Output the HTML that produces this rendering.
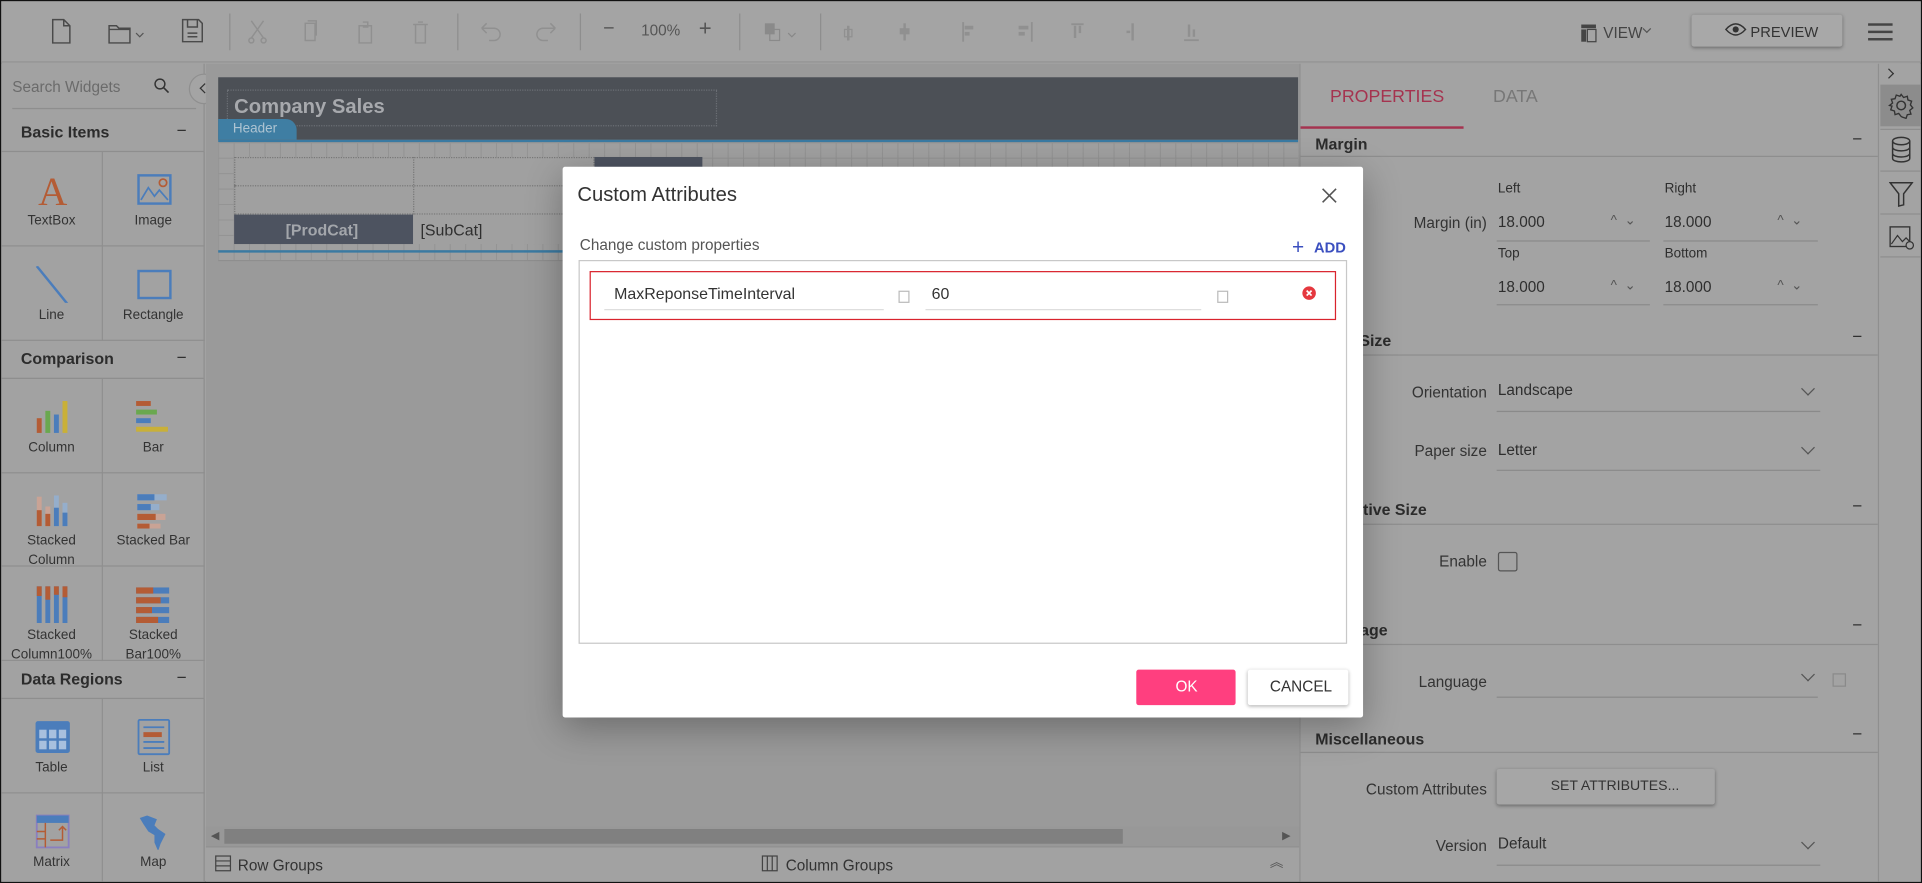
<!DOCTYPE html>
<html><head><meta charset="utf-8">
<style>
*{box-sizing:border-box;margin:0;padding:0}
html,body{width:1922px;height:883px;overflow:hidden;background:#000}
#w{position:absolute;left:0;top:0;width:1568px;height:720px;transform:scale(1.22577,1.22639);transform-origin:0 0;background:#a2a2a2;font-family:"Liberation Sans",sans-serif;color:#2e2e2e;overflow:hidden;border:1px solid #111}
.a{position:absolute}
.t{position:absolute;white-space:nowrap}
.hl{position:absolute;height:1px;background:#8e8e8e}
.vl{position:absolute;width:1px;background:#8e8e8e}
.cell{position:absolute;width:83px;height:77px;border-right:1px solid #8f8f8f;border-bottom:1px solid #8f8f8f;font-size:11px;text-align:center;color:#333}
.cell svg{position:absolute;left:27px;top:16px}
.cell span{position:absolute;left:0;right:0;top:48px;line-height:16px}
.sec{position:absolute;font-size:13px;font-weight:bold;color:#2c2c2c;white-space:nowrap}
.lab{position:absolute;font-size:12.5px;color:#333;text-align:right;white-space:nowrap}
.val{position:absolute;font-size:12.5px;color:#2e2e2e;white-space:nowrap}
.ul{position:absolute;height:1px;background:#8a8a8a}
.chev{position:absolute;width:8px;height:8px;border-right:1px solid #555;border-bottom:1px solid #555;transform:rotate(45deg)}
</style></head><body><div id="w">

<!-- toolbar -->
<div class="a" style="left:0;top:0;width:1568px;height:50px;background:#a4a4a4;border-bottom:1px solid #939393"></div>
<svg class="a" style="left:38px;top:13px" width="22" height="22"><path d="M4 2h9l5 5v14H4z M13 2v5h5" fill="none" stroke="#4a4a4a" stroke-width="1.2"/></svg>
<svg class="a" style="left:86px;top:14px" width="34" height="22"><path d="M2 6h6l2 2h9v12H2z M2 9h17" fill="none" stroke="#4a4a4a" stroke-width="1.2"/><path d="M24 12l3 3 3-3" fill="none" stroke="#555" stroke-width="1"/></svg>
<svg class="a" style="left:145px;top:13px" width="22" height="22"><path d="M3 2h13l3 3v15H3z M7 2v6h8V2 M7 13h8 M7 16h8" fill="none" stroke="#4a4a4a" stroke-width="1.2"/></svg>
<div class="vl" style="left:186px;top:10px;height:30px"></div>
<svg class="a" style="left:200px;top:14px" width="160" height="22" fill="none" stroke="#909090" stroke-width="1.2"><path d="M4 2l10 14 M14 2L4 16 M4 16a2 2 0 1 0 .1 0 M14 16a2 2 0 1 0 .1 0"/><path d="M48 4h8v14h-8z M50 2h7v12"/><path d="M92 6h10v14H92z M95 3h4v4h-4"/><path d="M136 5h12 M138 5v15h8V5 M140 3h4"/></svg>
<div class="vl" style="left:372px;top:10px;height:30px"></div>
<svg class="a" style="left:388px;top:14px" width="70" height="22" fill="none" stroke="#909090" stroke-width="1.2"><path d="M4 8h10a5 5 0 0 1 0 10h-4 M4 8l4-4 M4 8l4 4"/><path d="M64 8H54a5 5 0 0 0 0 10h4 M64 8l-4-4 M64 8l-4 4"/></svg>
<div class="vl" style="left:472px;top:10px;height:30px"></div>
<div class="t" style="left:491px;top:14px;font-size:16px;color:#555">−</div>
<div class="t" style="left:522px;top:17px;font-size:12.5px;color:#555">100%</div>
<div class="t" style="left:569px;top:12px;font-size:18px;color:#555">+</div>
<div class="vl" style="left:602px;top:10px;height:30px"></div>
<svg class="a" style="left:620px;top:14px" width="40" height="22"><rect x="3" y="4" width="8" height="9" fill="#8a8a8a"/><rect x="7" y="9" width="8" height="9" fill="none" stroke="#8a8a8a"/><path d="M22 12l3 3 3-3" fill="none" stroke="#888"/></svg>
<div class="vl" style="left:668px;top:10px;height:30px"></div>
<svg class="a" style="left:680px;top:14px" width="380" height="22" fill="#909090"><rect x="10" y="6" width="2" height="12"/><rect x="8" y="9" width="6" height="6" fill="none" stroke="#909090"/><rect x="56" y="4" width="2" height="14"/><rect x="53" y="8" width="8" height="5"/><rect x="104" y="3" width="1.5" height="16"/><rect x="106" y="6" width="7" height="3"/><rect x="106" y="11" width="4" height="3"/><rect x="150" y="6" width="8" height="3"/><rect x="150" y="11" width="5" height="3"/><rect x="160" y="3" width="1.5" height="16"/><rect x="193" y="4" width="10" height="1.5"/><rect x="195" y="6" width="2" height="10"/><rect x="199" y="6" width="2" height="6"/><rect x="242" y="4" width="2" height="14"/><rect x="238" y="10" width="3" height="2"/><rect x="288" y="5" width="2" height="10"/><rect x="292" y="9" width="2" height="6"/><rect x="285" y="17" width="12" height="1.5"/></svg>
<svg class="a" style="left:1288px;top:18px" width="14" height="16"><rect x="1" y="1" width="12" height="3" fill="#444"/><rect x="1" y="5" width="4" height="10" fill="#444"/><rect x="6" y="5" width="7" height="10" fill="none" stroke="#444"/></svg>
<div class="t" style="left:1307px;top:19px;font-size:12.5px;color:#444">VIEW</div>
<div class="chev" style="left:1340px;top:20px;width:5px;height:5px"></div>
<div class="a" style="left:1379px;top:11px;width:123px;height:26px;background:#a8a8a8;box-shadow:0 1px 3px rgba(0,0,0,.35);border-radius:2px"></div>
<svg class="a" style="left:1406px;top:16px" width="18" height="14"><path d="M1 7q8-9 16 0q-8 9-16 0z" fill="none" stroke="#333" stroke-width="1.2"/><circle cx="9" cy="7" r="2.5" fill="#333"/></svg>
<div class="t" style="left:1427px;top:18px;font-size:12px;color:#333">PREVIEW</div>
<div class="a" style="left:1523px;top:18px;width:20px;height:2px;background:#444;box-shadow:0 6px 0 #444,0 12px 0 #444"></div>

<!-- left panel -->
<div class="a" style="left:0;top:51px;width:166px;height:669px;background:#a2a2a2;border-right:1px solid #8f8f8f"></div>
<div class="t" style="left:9px;top:63px;font-size:12.5px;color:#6b6b6b">Search Widgets</div>
<svg class="a" style="left:124px;top:62px" width="14" height="14"><circle cx="5.5" cy="5.5" r="4" fill="none" stroke="#333" stroke-width="1.2"/><path d="M8.5 8.5l4 4" stroke="#333" stroke-width="1.3"/></svg>
<div class="hl" style="left:9px;top:87px;width:150px"></div>
<div class="sec" style="left:16px;top:99px">Basic Items</div><div class="t" style="left:143px;top:97px;font-size:14px">−</div>
<div class="hl" style="left:0;top:122px;width:165px"></div>
<div class="cell" style="left:0;top:123px"><svg width="30" height="30"><text x="15" y="27" text-anchor="middle" font-family="Liberation Serif" font-size="33" fill="#b45c35">A</text></svg><span>TextBox</span></div>
<div class="cell" style="left:83px;top:123px"><svg width="30" height="30"><rect x="2" y="3" width="26" height="23" fill="none" stroke="#4b7dbb" stroke-width="2"/><path d="M4 23l6-10 5 7 4-5 7 8" fill="none" stroke="#4b7dbb" stroke-width="1.4"/><circle cx="22" cy="9" r="3" fill="none" stroke="#b45c35" stroke-width="1.4"/></svg><span>Image</span></div>
<div class="cell" style="left:0;top:200px"><svg width="30" height="30"><path d="M2 0l26 32" stroke="#4b7dbb" stroke-width="2"/></svg><span>Line</span></div>
<div class="cell" style="left:83px;top:200px"><svg width="30" height="30"><rect x="2" y="4" width="26" height="22" fill="none" stroke="#4b7dbb" stroke-width="2"/></svg><span>Rectangle</span></div>
<div class="sec" style="left:16px;top:284px">Comparison</div><div class="t" style="left:143px;top:282px;font-size:14px">−</div>
<div class="hl" style="left:0;top:307px;width:165px"></div>
<div class="cell" style="left:0;top:308px"><svg width="30" height="30"><rect x="2" y="16" width="4" height="12" fill="#b45c35"/><rect x="9" y="10" width="4" height="18" fill="#6aa84f"/><rect x="16" y="13" width="4" height="15" fill="#4b7dbb"/><rect x="23" y="2" width="4" height="26" fill="#c9b038"/></svg><span>Column</span></div>
<div class="cell" style="left:83px;top:308px"><svg width="30" height="30"><rect x="0" y="2" width="12" height="4" fill="#b45c35"/><rect x="0" y="9" width="17" height="4" fill="#6aa84f"/><rect x="0" y="16" width="12" height="4" fill="#4b7dbb"/><rect x="0" y="23" width="26" height="4" fill="#c9b038"/></svg><span>Bar</span></div>
<div class="cell" style="left:0;top:384px"><svg width="30" height="30"><rect x="2" y="4" width="4" height="24" fill="#c9a395"/><rect x="2" y="15" width="4" height="13" fill="#b45c35"/><rect x="9" y="12" width="4" height="16" fill="#c9a395"/><rect x="9" y="18" width="4" height="10" fill="#b45c35"/><rect x="16" y="3" width="4" height="25" fill="#95aecb"/><rect x="16" y="13" width="4" height="15" fill="#4b7dbb"/><rect x="23" y="9" width="4" height="19" fill="#95aecb"/><rect x="23" y="17" width="4" height="11" fill="#4b7dbb"/></svg><span>Stacked<br>Column</span></div>
<div class="cell" style="left:83px;top:384px"><svg width="30" height="30"><rect x="1" y="2" width="24" height="5" fill="#95aecb"/><rect x="1" y="2" width="14" height="5" fill="#4b7dbb"/><rect x="1" y="10" width="18" height="5" fill="#95aecb"/><rect x="1" y="10" width="11" height="5" fill="#4b7dbb"/><rect x="1" y="18" width="23" height="5" fill="#c9a395"/><rect x="1" y="18" width="15" height="5" fill="#b45c35"/><rect x="1" y="26" width="19" height="4" fill="#c9a395"/><rect x="1" y="26" width="10" height="4" fill="#b45c35"/></svg><span>Stacked Bar</span></div>
<div class="cell" style="left:0;top:461px"><svg width="30" height="30"><g fill="#4b7dbb"><rect x="2" y="0" width="4" height="30"/><rect x="9" y="0" width="4" height="30"/><rect x="16" y="0" width="4" height="30"/><rect x="23" y="0" width="4" height="30"/></g><g fill="#b45c35"><rect x="2" y="0" width="4" height="8"/><rect x="9" y="0" width="4" height="11"/><rect x="16" y="0" width="4" height="7"/><rect x="23" y="0" width="4" height="9"/></g></svg><span>Stacked<br>Column100%</span></div>
<div class="cell" style="left:83px;top:461px"><svg width="30" height="30"><g fill="#4b7dbb"><rect x="0" y="1" width="27" height="5"/><rect x="0" y="9" width="27" height="5"/><rect x="0" y="17" width="27" height="5"/><rect x="0" y="25" width="27" height="5"/></g><g fill="#b45c35"><rect x="0" y="1" width="14" height="5"/><rect x="0" y="9" width="20" height="5"/><rect x="0" y="17" width="13" height="5"/><rect x="0" y="25" width="18" height="5"/></g></svg><span>Stacked<br>Bar100%</span></div>
<div class="sec" style="left:16px;top:545px">Data Regions</div><div class="t" style="left:143px;top:543px;font-size:14px">−</div>
<div class="hl" style="left:0;top:568px;width:165px"></div>
<div class="cell" style="left:0;top:569px"><svg width="30" height="30"><rect x="1" y="2" width="28" height="26" rx="2" fill="#4b7dbb"/><g fill="#a8c0de"><rect x="4" y="9" width="6" height="7"/><rect x="12" y="9" width="6" height="7"/><rect x="20" y="9" width="6" height="7"/><rect x="4" y="18" width="6" height="7"/><rect x="12" y="18" width="6" height="7"/><rect x="20" y="18" width="6" height="7"/></g></svg><span>Table</span></div>
<div class="cell" style="left:83px;top:569px"><svg width="30" height="30"><rect x="2" y="1" width="25" height="28" rx="1" fill="none" stroke="#4b7dbb" stroke-width="1.5"/><path d="M6 7h17M6 19h17M6 24h17" stroke="#4b7dbb" stroke-width="1.5"/><rect x="6" y="11" width="15" height="4" fill="#b45c35"/></svg><span>List</span></div>
<div class="cell" style="left:0;top:646px"><svg width="30" height="30"><rect x="2" y="2" width="26" height="26" fill="none" stroke="#8a7fbf" stroke-width="1.5"/><rect x="2" y="2" width="26" height="6" fill="#4b7dbb"/><path d="M2 15h7M2 21h7M9 8v20M13 22h10v-10M20 14l3-3 3 3" fill="none" stroke="#b45c35" stroke-width="1.2"/></svg><span>Matrix</span></div>
<div class="cell" style="left:83px;top:646px"><svg width="30" height="30"><path d="M3 4l6-2 8 3-2 5 3 3 6 4-4 8-2 6-3-7 0-6-5-3-4-6z" fill="#4b7dbb"/></svg><span>Map</span></div>
<div class="a" style="left:153px;top:59px;width:25px;height:25px;border-radius:50%;background:#a4a4a4;border:1px solid #8f8f8f"></div>
<div class="chev" style="left:163px;top:68px;width:6px;height:6px;transform:rotate(135deg);border-color:#333"></div>

<!-- canvas -->
<div class="a" style="left:167px;top:51px;width:892px;height:637px;background:#9a9a9a"></div>
<div class="a" style="left:177px;top:62px;width:881px;height:51px;background:#4c5056"></div>
<div class="a" style="left:184px;top:72px;width:400px;height:30px;border:1px dotted #6b6f75"></div>
<div class="t" style="left:190px;top:77px;font-size:16.5px;font-weight:bold;color:#a7a9ad">Company Sales</div>
<div class="a" style="left:177px;top:96px;width:64px;height:17px;background:#3f7ea3;border-radius:0 9px 0 0"></div>
<div class="t" style="left:189px;top:98px;font-size:11px;color:#aec4d2">Header</div>
<div class="a" style="left:177px;top:113px;width:881px;height:2px;background:#3a7aa2"></div>
<div class="a" style="left:177px;top:115px;width:881px;height:97px;background-color:#a0a0a0;background-image:linear-gradient(90deg,#939393 1px,transparent 1px),linear-gradient(#939393 1px,transparent 1px);background-size:12.6px 12.6px;border-bottom:1px solid #8e8e8e"></div>
<div class="a" style="left:190px;top:127px;width:294px;height:47px;background:#a0a0a0;border:1px dotted #777"></div>
<div class="a" style="left:190px;top:150px;width:294px;height:1px;border-top:1px dotted #777"></div>
<div class="a" style="left:336px;top:127px;width:1px;height:47px;border-left:1px dotted #777"></div>
<div class="a" style="left:484px;top:127px;width:88px;height:23px;background:#4d5360"></div>
<div class="a" style="left:190px;top:174px;width:146px;height:24px;background:#4d5360"></div>
<div class="t" style="left:232px;top:179px;font-size:13px;font-weight:bold;color:#a3a6ab">[ProdCat]</div>
<div class="a" style="left:336px;top:174px;width:240px;height:24px;background:#a0a0a0"></div>
<div class="t" style="left:342px;top:179px;font-size:13px;color:#2f2f2f">[SubCat]</div>
<div class="a" style="left:177px;top:203px;width:881px;height:2px;background:#3a7aa2"></div>
<div class="a" style="left:167px;top:673px;width:892px;height:16px;background:#989898"></div>
<div class="a" style="left:182px;top:675px;width:733px;height:12px;background:#808080"></div>
<div class="t" style="left:171px;top:675px;font-size:9px;color:#555">◀</div>
<div class="t" style="left:1045px;top:675px;font-size:9px;color:#555">▶</div>
<div class="a" style="left:167px;top:689px;width:892px;height:31px;background:#a2a2a2;border-top:1px solid #8e8e8e"></div>
<svg class="a" style="left:174px;top:696px" width="14" height="14"><rect x="1" y="1" width="12" height="12" fill="none" stroke="#444"/><path d="M1 5h12M1 9h12" stroke="#444"/></svg>
<div class="t" style="left:193px;top:698px;font-size:12.5px;color:#333">Row Groups</div>
<svg class="a" style="left:620px;top:696px" width="14" height="14"><rect x="1" y="1" width="12" height="12" fill="none" stroke="#444"/><path d="M5 1v12M9 1v12" stroke="#444"/></svg>
<div class="t" style="left:640px;top:698px;font-size:12.5px;color:#333">Column Groups</div>
<div class="t" style="left:1035px;top:694px;font-size:11px;color:#555">︽</div>

<!-- right panel -->
<div class="a" style="left:1059px;top:51px;width:473px;height:669px;background:#a3a3a3;border-left:1px solid #8f8f8f;border-right:1px solid #8f8f8f"></div>
<div class="t" style="left:1084px;top:70px;font-size:14.5px;color:#a5334f;font-weight:500">PROPERTIES</div>
<div class="t" style="left:1217px;top:70px;font-size:14.5px;color:#777">DATA</div>
<div class="a" style="left:1060px;top:102px;width:133px;height:2px;background:#a5334f"></div>
<div class="sec" style="left:1072px;top:109px">Margin</div><div class="t" style="left:1510px;top:104px;font-size:14px">−</div>
<div class="hl" style="left:1060px;top:126px;width:471px"></div>
<div class="val" style="left:1221px;top:147px;font-size:11px">Left</div><div class="val" style="left:1357px;top:147px;font-size:11px">Right</div>
<div class="lab" style="left:1120px;top:174px;width:92px">Margin (in)</div>
<div class="val" style="left:1221px;top:173px">18.000</div><div class="val" style="left:1357px;top:173px">18.000</div>
<div class="t" style="left:1313px;top:172px;font-size:11px;color:#555">^ &nbsp;⌄</div><div class="t" style="left:1449px;top:172px;font-size:11px;color:#555">^ &nbsp;⌄</div>
<div class="ul" style="left:1220px;top:195px;width:125px"></div><div class="ul" style="left:1356px;top:195px;width:126px"></div>
<div class="val" style="left:1221px;top:200px;font-size:11px">Top</div><div class="val" style="left:1357px;top:200px;font-size:11px">Bottom</div>
<div class="val" style="left:1221px;top:226px">18.000</div><div class="val" style="left:1357px;top:226px">18.000</div>
<div class="t" style="left:1313px;top:225px;font-size:11px;color:#555">^ &nbsp;⌄</div><div class="t" style="left:1449px;top:225px;font-size:11px;color:#555">^ &nbsp;⌄</div>
<div class="ul" style="left:1220px;top:247px;width:125px"></div><div class="ul" style="left:1356px;top:247px;width:126px"></div>
<div class="sec" style="left:1000px;width:134px;text-align:right;top:269px">Page Size</div><div class="t" style="left:1510px;top:265px;font-size:14px">−</div>
<div class="hl" style="left:1060px;top:288px;width:471px"></div>
<div class="lab" style="left:1100px;top:312px;width:112px">Orientation</div><div class="val" style="left:1221px;top:310px">Landscape</div><div class="chev" style="left:1470px;top:312px"></div><div class="ul" style="left:1220px;top:334px;width:264px"></div>
<div class="lab" style="left:1100px;top:360px;width:112px">Paper size</div><div class="val" style="left:1221px;top:359px">Letter</div><div class="chev" style="left:1470px;top:360px"></div><div class="ul" style="left:1220px;top:382px;width:264px"></div>
<div class="sec" style="left:1000px;width:163px;text-align:right;top:407px">Effective Size</div><div class="t" style="left:1510px;top:403px;font-size:14px">−</div>
<div class="hl" style="left:1060px;top:426px;width:471px"></div>
<div class="lab" style="left:1100px;top:450px;width:112px">Enable</div>
<div class="a" style="left:1221px;top:449px;width:16px;height:16px;border:1.5px solid #555;border-radius:2px"></div>
<div class="sec" style="left:1000px;width:131px;text-align:right;top:505px">Language</div><div class="t" style="left:1510px;top:500px;font-size:14px">−</div>
<div class="hl" style="left:1060px;top:524px;width:471px"></div>
<div class="lab" style="left:1100px;top:548px;width:112px">Language</div><div class="chev" style="left:1470px;top:545px"></div><div class="ul" style="left:1220px;top:567px;width:262px"></div>
<div class="a" style="left:1494px;top:548px;width:11px;height:11px;border:1px solid #8a8a8a"></div>
<div class="sec" style="left:1072px;top:594px">Miscellaneous</div><div class="t" style="left:1510px;top:589px;font-size:14px">−</div>
<div class="hl" style="left:1060px;top:612px;width:471px"></div>
<div class="lab" style="left:1080px;top:636px;width:132px">Custom Attributes</div>
<div class="a" style="left:1220px;top:626px;width:178px;height:29px;background:#a6a6a6;box-shadow:0 1px 3px rgba(0,0,0,.35);border-radius:2px"></div>
<div class="t" style="left:1264px;top:634px;font-size:11.5px;color:#333">SET ATTRIBUTES...</div>
<div class="lab" style="left:1100px;top:682px;width:112px">Version</div><div class="val" style="left:1221px;top:680px">Default</div><div class="chev" style="left:1470px;top:682px"></div><div class="ul" style="left:1220px;top:704px;width:264px"></div>

<!-- right strip -->
<div class="a" style="left:1532px;top:51px;width:36px;height:669px;background:#a3a3a3"></div>
<div class="chev" style="left:1537px;top:56px;width:6px;height:6px;transform:rotate(-45deg);border-color:#333"></div>
<div class="a" style="left:1533px;top:68px;width:35px;height:34px;background:#8c8c8c"></div>
<svg class="a" style="left:1539px;top:74px" width="22" height="22"><circle cx="11" cy="11" r="3.5" fill="none" stroke="#333" stroke-width="1.2"/><path d="M11 2l2 2.5 3-1 .5 3 3 1-1 3 2 2.5-2.5 2 1 3-3 .5-1 3-3-1L11 20l-2-2.5-3 1-.5-3-3-1 1-3L1.5 11 4 9l-1-3 3-.5 1-3 3 1z" fill="none" stroke="#333" stroke-width="1.1"/></svg>
<div class="hl" style="left:1533px;top:104px;width:35px"></div>
<svg class="a" style="left:1541px;top:110px" width="18" height="22"><ellipse cx="9" cy="4" rx="7" ry="3" fill="none" stroke="#333" stroke-width="1.2"/><path d="M2 4v14c0 4 14 4 14 0V4 M2 9c0 4 14 4 14 0 M2 14c0 4 14 4 14 0" fill="none" stroke="#333" stroke-width="1.2"/></svg>
<div class="hl" style="left:1533px;top:138px;width:35px"></div>
<svg class="a" style="left:1540px;top:146px" width="20" height="22"><path d="M1 2h18l-7 9v9l-4 1V11z" fill="none" stroke="#333" stroke-width="1.2"/></svg>
<div class="hl" style="left:1533px;top:173px;width:35px"></div>
<svg class="a" style="left:1540px;top:182px" width="22" height="22"><rect x="1" y="2" width="16" height="16" fill="none" stroke="#333" stroke-width="1.1"/><path d="M2 16l5-7 4 5 3-3 3 3" fill="none" stroke="#333"/><circle cx="17" cy="17" r="3" fill="#a3a3a3" stroke="#333"/></svg>
<div class="hl" style="left:1533px;top:208px;width:35px"></div>

<!-- dialog -->
<div class="a" style="left:458px;top:135px;width:653px;height:449px;background:#fff;box-shadow:0 8px 30px rgba(0,0,0,.3);border-radius:2px"></div>
<div class="t" style="left:470px;top:149px;font-size:16.5px;color:#333">Custom Attributes</div>
<svg class="a" style="left:1077px;top:152px" width="13" height="13"><path d="M1 1l11 11M12 1L1 12" stroke="#555" stroke-width="1.3"/></svg>
<div class="t" style="left:472px;top:192px;font-size:12.5px;color:#555">Change custom properties</div>
<div class="t" style="left:1053px;top:191px;font-size:17px;color:#3b4fbf">+</div>
<div class="t" style="left:1071px;top:194px;font-size:12px;color:#3b4fbf;font-weight:bold">ADD</div>
<div class="a" style="left:471px;top:211px;width:627px;height:313px;border:1px solid #c8c8c8"></div>
<div class="a" style="left:480px;top:220px;width:609px;height:40px;border:1px solid #d9232d"></div>
<div class="t" style="left:500px;top:231px;font-size:13px;color:#333">MaxReponseTimeInterval</div>
<div class="ul" style="left:492px;top:251px;width:228px;background:#ddd"></div>
<div class="a" style="left:732px;top:236px;width:9px;height:10px;border:1px solid #bbb"></div>
<div class="t" style="left:759px;top:231px;font-size:13px;color:#333">60</div>
<div class="ul" style="left:754px;top:251px;width:225px;background:#ddd"></div>
<div class="a" style="left:992px;top:236px;width:9px;height:10px;border:1px solid #bbb"></div>
<svg class="a" style="left:1061px;top:232px" width="12" height="12"><circle cx="6" cy="6" r="5.5" fill="#e5383f"/><path d="M4 4l4 4M8 4l-4 4" stroke="#fff" stroke-width="1.4"/></svg>
<div class="a" style="left:926px;top:545px;width:81px;height:29px;background:#ff3f7f;border-radius:2px"></div>
<div class="t" style="left:958px;top:552px;font-size:12.5px;color:#fff">OK</div>
<div class="a" style="left:1017px;top:545px;width:82px;height:29px;background:#fff;border-radius:2px;box-shadow:0 1px 3px rgba(0,0,0,.3)"></div>
<div class="t" style="left:1035px;top:552px;font-size:12.5px;color:#333">CANCEL</div>
</div></body></html>
